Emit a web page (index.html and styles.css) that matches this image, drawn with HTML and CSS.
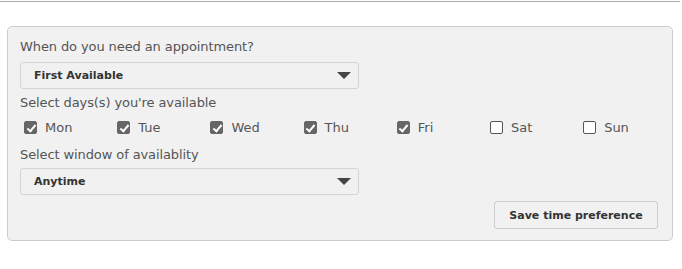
FILE: index.html
```html
<!DOCTYPE html>
<html>
<head>
<meta charset="utf-8">
<link rel="stylesheet" href="styles.css">
</head>
<body>
<div class="topline"></div>
<div class="panel">
  <div class="label first">When do you need an appointment?</div>
  <div class="select"><span>First Available</span><span class="caret"></span></div>
  <div class="label l2">Select days(s) you're available</div>
  <div class="days">
    <div class="day"><span class="box on"></span>Mon</div>
    <div class="day"><span class="box on"></span>Tue</div>
    <div class="day"><span class="box on"></span>Wed</div>
    <div class="day"><span class="box on"></span>Thu</div>
    <div class="day"><span class="box on"></span>Fri</div>
    <div class="day"><span class="box"></span>Sat</div>
    <div class="day"><span class="box"></span>Sun</div>
  </div>
  <div class="label l3">Select window of availablity</div>
  <div class="select s2"><span>Anytime</span><span class="caret"></span></div>
  <div class="actions"><button class="btn">Save time preference</button></div>
</div>
</body>
</html>
```
FILE: styles.css
```css
html, body { margin: 0; padding: 0; background: #fff; }
body { font-family: "DejaVu Sans", sans-serif; font-size: 13px; color: #555; }
.topline { height: 1px; background: #aaa; margin-top: 1px; width: 680px; }
.panel {
  margin: 24px 0 0 7px;
  width: 640px;
  height: 191px;
  border: 1px solid #ccc;
  border-radius: 5px;
  background: #f1f1f1;
  padding: 11px 12px 11px 12px;
  box-sizing: content-box;
}
.label { height: 18px; line-height: 18px; letter-spacing: -0.1px; }
.label.l2 { margin-top: 5px; }
.label.l3 { margin-top: 8px; }
.select {
  width: 339px; height: 27px; box-sizing: border-box;
  border: 1px solid #d4d4d4; border-radius: 3px;
  display: flex; align-items: center; justify-content: space-between;
  padding: 0 7px 0 13px; margin-top: 6px;
  font-weight: bold; color: #333; font-size: 11px;
}
.select.s2 { margin-top: 4px; }
.caret { width: 0; height: 0; border-left: 7px solid transparent; border-right: 7px solid transparent; border-top: 7px solid #444; }
.days { display: flex; height: 22px; align-items: center; padding-left: 4px; margin-top: 4px; }
.day { flex: none; width: 93.2px; display: flex; align-items: center; }
.box {
  width: 13px; height: 13px; box-sizing: border-box; border: 1px solid #555; border-radius: 2px;
  background: #fff; margin-right: 8px; position: relative;
}
.box.on { background: #666; border-color: #666; }
.box.on::after {
  content: ""; position: absolute; left: 3.5px; top: 1px; width: 3px; height: 7px;
  border-right: 2px solid #fff; border-bottom: 2px solid #fff; transform: rotate(40deg);
}
.actions { display: flex; justify-content: flex-end; padding-right: 2px; margin-top: 6px; }
.btn {
  font-family: inherit; font-weight: bold; font-size: 11px; color: #333;
  width: 164px; height: 28px; background: #f1f1f1; border: 1px solid #ccc; border-radius: 3px;
}
```
